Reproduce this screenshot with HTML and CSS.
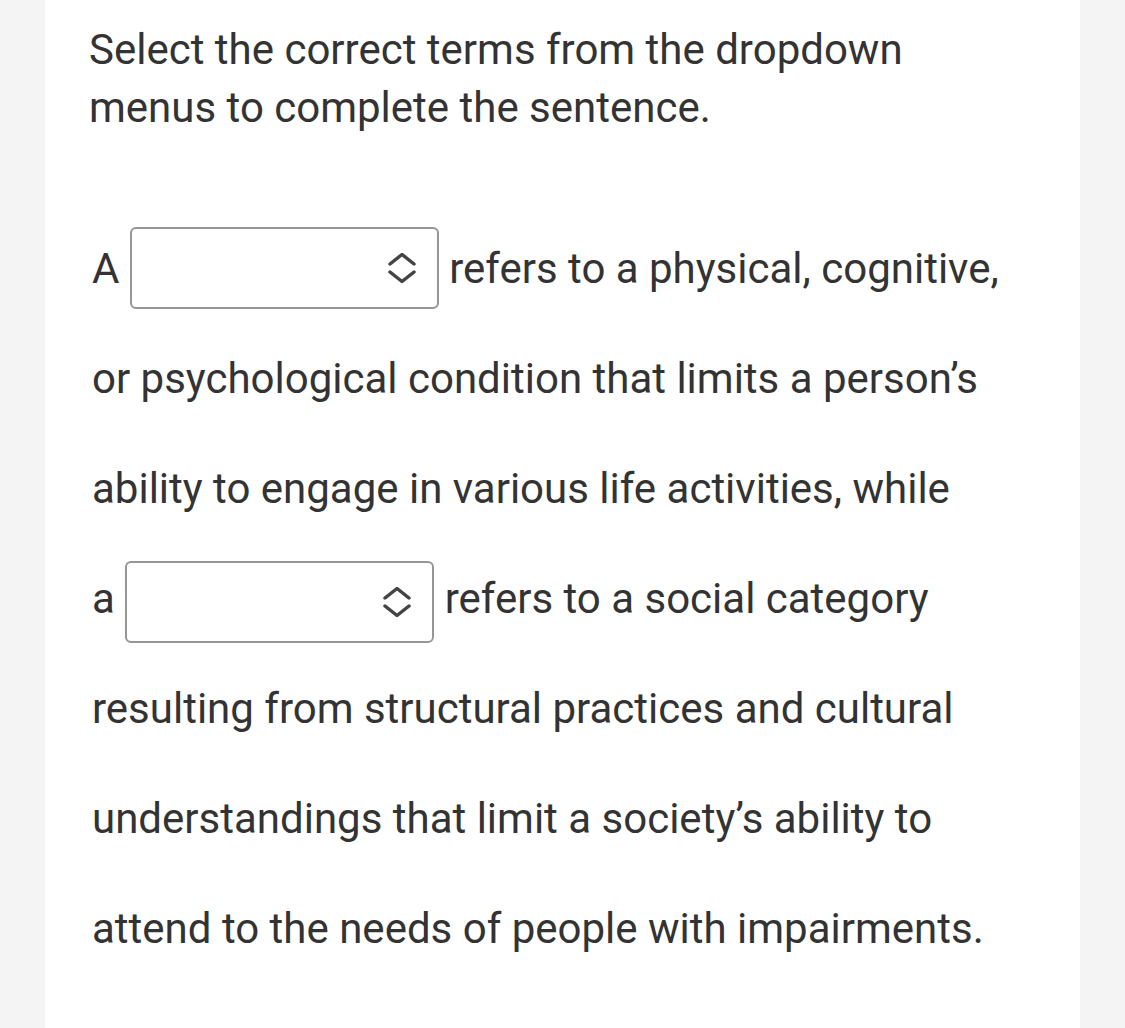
FILE: index.html
```html
<!DOCTYPE html>
<html lang="en">
<head>
<meta charset="utf-8">
<title>Dropdown question</title>
<link rel="stylesheet" href="styles.css">
</head>
<body>
<main class="card">
  <h1 class="prompt">Select the correct terms from the dropdown<br>menus to complete the sentence.</h1>
  <div class="sentence">
    <div class="line">A <span class="select sel-a"><svg class="chev" viewBox="0 0 28 32" width="28" height="32"><polyline points="2,11 14,1.5 26,11"/><polyline points="2,19 14,28.5 26,19"/></svg></span> refers to a physical, cognitive,</div>
    <div class="line">or psychological condition that limits a person’s</div>
    <div class="line">ability to engage in various life activities, while</div>
    <div class="line">a <span class="select sel-b"><svg class="chev" viewBox="0 0 28 32" width="28" height="32"><polyline points="2,11 14,1.5 26,11"/><polyline points="2,19 14,28.5 26,19"/></svg></span> refers to a social category</div>
    <div class="line">resulting from structural practices and cultural</div>
    <div class="line">understandings that limit a society’s ability to</div>
    <div class="line">attend to the needs of people with impairments.</div>
  </div>
</main>
</body>
</html>
```

FILE: styles.css
```css
html, body {
  margin: 0;
  padding: 0;
  background: #f4f4f4;
}

body {
  font-family: Roboto, "Noto Sans", "Liberation Sans", sans-serif;
  color: #333333;
}

.card {
  margin-left: 45px;
  width: 1035px;
  min-height: 1028px;
  background: #ffffff;
  box-sizing: border-box;
  padding: 21px 0 0 44px;
}

.prompt {
  margin: 0;
  font-size: 42px;
  font-weight: 400;
  line-height: 58px;
}

.sentence {
  margin-top: 77px;
  margin-left: 3px;
  font-size: 42px;
}

.line {
  line-height: 110px;
  height: 110px;
  white-space: nowrap;
}

.select {
  display: inline-block;
  position: relative;
  width: 309px;
  height: 82px;
  box-sizing: border-box;
  border: 2px solid #969696;
  border-radius: 6px;
  vertical-align: -26px;
  background: #fff;
}

.sel-b {
  vertical-align: -30px;
}

.chev {
  position: absolute;
  right: 21px;
  top: 24px;
  fill: none;
  stroke: #444444;
  stroke-width: 3.5;
  stroke-linecap: round;
  stroke-linejoin: round;
}
```
